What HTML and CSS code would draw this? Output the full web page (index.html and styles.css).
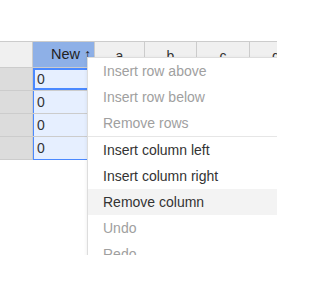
FILE: index.html
```html
<!DOCTYPE html>
<html>
<head>
    <link rel="stylesheet" href="styles.css">
</head>
<body>
    <div class="viewport">
        <div class="sheet">
            <div class="cell corner"></div>
            <div class="cell head selected-head">New &#8593;</div>
            <div class="cell head">a</div>
            <div class="cell head">b</div>
            <div class="cell head">c</div>
            <div class="cell head">d</div>

            <div class="cell row-head"></div>
            <div class="cell sel active">0</div>
            <div class="cell"></div>
            <div class="cell"></div>
            <div class="cell"></div>
            <div class="cell"></div>

            <div class="cell row-head"></div>
            <div class="cell sel">0</div>
            <div class="cell"></div>
            <div class="cell"></div>
            <div class="cell"></div>
            <div class="cell"></div>

            <div class="cell row-head"></div>
            <div class="cell sel">0</div>
            <div class="cell"></div>
            <div class="cell"></div>
            <div class="cell"></div>
            <div class="cell"></div>

            <div class="cell row-head"></div>
            <div class="cell sel last">0</div>
            <div class="cell"></div>
            <div class="cell"></div>
            <div class="cell"></div>
            <div class="cell"></div>
        </div>

        <div class="context-menu">
            <div class="item disabled">Insert row above</div>
            <div class="item disabled">Insert row below</div>
            <div class="item disabled">Remove rows</div>
            <div class="divider"></div>
            <div class="item">Insert column left</div>
            <div class="item">Insert column right</div>
            <div class="item hover">Remove column</div>
            <div class="item disabled">Undo</div>
            <div class="item disabled">Redo</div>
        </div>
    </div>
</body>
</html>
```

FILE: styles.css
```css
body {
    margin: 0;
    font-family: "Liberation Sans", Arial, sans-serif;
    font-size: 14px;
    color: #333;
    background: #fff;
}

.viewport {
    position: relative;
    width: 277px;
    height: 255px;
    overflow: hidden;
    padding-top: 41px;
    box-sizing: border-box;
}

.sheet {
    display: grid;
    grid-template-columns: 33px 62px 50px 52px 53px 53px;
    grid-template-rows: 26px repeat(4, 23px);
    border-top: 1px solid #ccc;
}

.cell {
    border-right: 1px solid #ccc;
    border-bottom: 1px solid #ccc;
    padding: 0 4px;
    line-height: 22px;
    white-space: nowrap;
    overflow: hidden;
    box-sizing: border-box;
}

.corner,
.head {
    background: #f0f0f0;
    text-align: center;
    line-height: 25px;
    padding-top: 2px;
}

.selected-head {
    background: #8eb0e7;
    color: #222;
    text-align: left;
    padding-left: 18px;
    padding-top: 0;
    font-size: 14.5px;
}

.row-head {
    background: #dcdcdc;
}

.sel {
    background: #e6efff;
    box-shadow: inset 1px 0 0 #4b89ff;
}

.sel.last {
    border-bottom-color: #4b89ff;
}

.sel.active {
    box-shadow: inset 0 0 0 2px #4b89ff;
}

.context-menu {
    position: absolute;
    top: 57px;
    left: 87px;
    width: 200px;
    background: #fff;
    border: 1px solid #ddd;
    box-shadow: 0 1px 4px rgba(0,0,0,0.08);
}

.item {
    height: 26px;
    line-height: 26px;
    padding-left: 15px;
    color: #333;
}

.item.disabled {
    color: #a0a0a0;
}

.item.hover {
    background: #f3f3f3;
}

.divider {
    height: 1px;
    background: #e6e6e6;
}
```
